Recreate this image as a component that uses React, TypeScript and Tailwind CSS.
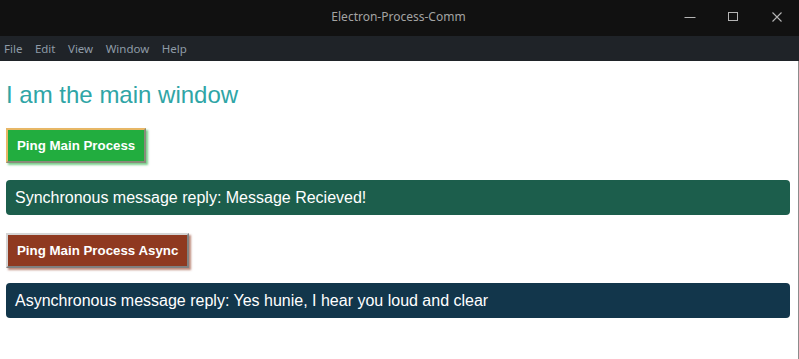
export default function App() {
  const menus = ['File', 'Edit', 'View', 'Window', 'Help'];
  return (
    <div className="w-[799px] h-[359px] flex flex-col bg-white overflow-hidden">
      <div className="h-[36px] bg-[#111111] flex items-center relative shrink-0">
        <div className="flex-1 text-center text-[12px] text-[#a3a3a3] pr-[2px] pb-[3px] font-['Noto_Sans',sans-serif]">
          Electron-Process-Comm
        </div>
        <div className="absolute right-0 top-0 h-full flex items-center">
          <svg width="12" height="12" viewBox="0 0 12 12" className="mr-[31px] mb-[3px]">
            <path d="M0.5 6.5H11.5" stroke="#b5b5b5" strokeWidth="1" />
          </svg>
          <svg width="12" height="12" viewBox="0 0 12 12" className="mr-[32px] mb-[3px]">
            <rect x="1.5" y="1.5" width="9" height="8" fill="none" stroke="#b5b5b5" strokeWidth="1" />
          </svg>
          <svg width="12" height="12" viewBox="0 0 12 12" className="mr-[16px] mb-[3px]">
            <path d="M1.5 1.5L10.5 10.5M10.5 1.5L1.5 10.5" stroke="#b5b5b5" strokeWidth="1.1" />
          </svg>
        </div>
      </div>
      <div className="h-[25px] bg-[#1f2328] flex items-center gap-[12.5px] pl-[4px] shrink-0 text-[11.5px] text-[#8e9ba7] font-['Noto_Sans',sans-serif]">
        {menus.map((m) => (
          <span key={m}>{m}</span>
        ))}
      </div>
      <div className="flex-1 flex flex-col items-start px-[6px] pr-[8px] border-r border-[#8c8c8c] font-['Liberation_Sans',Arial,sans-serif]">
        <h1 className="text-[24px] leading-[28px] text-[#2fa5a6] mt-[20px]">I am the main window</h1>
        <button className="mt-[19px] h-[35px] px-[9px] bg-[#22ad3f] text-white text-[13.3px] font-bold border-2 border-t-[#e7b766] border-l-[#e7b766] border-b-[#8a8a7a] border-r-[#8a8a7a] shadow-[2px_2px_2px_rgba(34,173,63,0.6)]">
          Ping Main Process
        </button>
        <div className="mt-[17px] self-stretch h-[35px] rounded-[4px] bg-[#1c5e4c] text-white text-[16px] flex items-center pl-[9px]">
          Synchronous message reply: Message Recieved!
        </div>
        <button className="mt-[18px] h-[35px] px-[9px] bg-[#8f3920] text-white text-[13.3px] font-bold border-2 border-t-[#d4d4d4] border-l-[#d4d4d4] border-b-[#808080] border-r-[#808080] shadow-[2px_2px_2px_rgba(143,57,32,0.6)]">
          Ping Main Process Async
        </button>
        <div className="mt-[15px] self-stretch h-[35px] rounded-[4px] bg-[#12364b] text-white text-[16px] flex items-center pl-[9px]">
          Asynchronous message reply: Yes hunie, I hear you loud and clear
        </div>
      </div>
    </div>
  );
}
